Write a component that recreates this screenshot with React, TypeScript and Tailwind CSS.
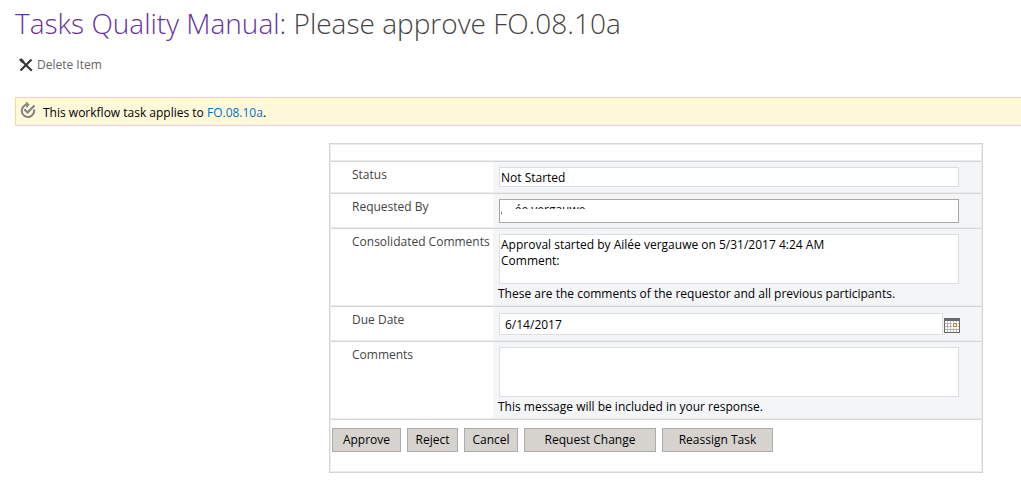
import type { ReactNode } from "react";

const fieldBox = "block w-full border border-[#dcdee1] bg-white text-black outline-none";
const divider = "mt-px border-t border-[#d6d6d6] shadow-[0_-1px_0_#ebebeb]";

function DeleteIcon() {
  return (
    <svg width="14" height="14" viewBox="0 0 14 14" aria-hidden="true">
      <path d="M1.5 1.5 12.8 12.8M12.5 1.5 1.5 12.5" stroke="#35383b" strokeWidth="2.2" fill="none" />
      <path d="M0 1.5 2.5.2 5.5 3.5 3 5z" fill="#35383b" />
    </svg>
  );
}

function WorkflowIcon() {
  return (
    <svg width="16" height="16" viewBox="0 0 16 16" fill="none" stroke="#808080" aria-hidden="true">
      <path d="M14 7.5A6.2 6.2 0 1 1 7.5 2.6" strokeWidth="2" />
      <path d="M5.8.3 8.6 2.6 6.4 5.4" strokeWidth="1.5" />
      <path d="M4.3 7.3 7.5 10.5 14.5 3.5" strokeWidth="2" />
    </svg>
  );
}

function CalendarIcon() {
  return (
    <svg width="16" height="15" viewBox="0 0 16 15" shapeRendering="crispEdges" aria-hidden="true">
      <path fill="#6b6b6b" d="M0 0h16v15H0z" />
      <path fill="#fff" d="M1 3h14v11H1z" />
      <path fill="#b5b5b5" d="M3 3h1v11H3zM6 3h1v11H6zM9 3h1v11H9zM12 3h1v11h-1zM1 5h14v1H1zM1 8h14v1H1zM1 11h14v1H1z" />
      <path fill="#fff" d="M8 4h6v6H8z" />
      <path fill="#e07b1a" d="M9 5h4v4H9z" />
      <path fill="#fff" d="M10 6h2v2h-2z" />
    </svg>
  );
}

interface RowProps {
  label: string;
  id: string;
  children: ReactNode;
}

function FormRow({ label, id, children }: RowProps) {
  return (
    <div className={`flex ${divider}`}>
      <label htmlFor={id} className="w-[162px] shrink-0 pt-[5px] pl-[21px] text-[#444]">
        {label}
      </label>
      <div className="min-w-0 flex-1 bg-[#f4f5f7] pt-[5px] pr-[22px] pl-[5px]">{children}</div>
    </div>
  );
}

const actions = [
  { name: "Approve", width: "w-[69px]" },
  { name: "Reject", width: "w-[51px]" },
  { name: "Cancel", width: "w-[54px]" },
  { name: "Request Change", width: "w-[132px]" },
  { name: "Reassign Task", width: "w-[111px]" },
];

export default function App() {
  return (
    <main className="pt-[3px] pb-5 pl-[15px] font-['Open_Sans','Noto_Sans',sans-serif] text-[12px] leading-4 text-black">
      <h1 className="text-[28px] leading-10 font-light whitespace-nowrap text-[#444]">
        <a href="#tasks" className="text-[#663399]">
          Tasks Quality Manual
        </a>
        : Please approve FO.08.10a
      </h1>

      <button type="button" className="mt-[13px] ml-1 flex h-[18px] items-center gap-1 text-[#666]">
        <DeleteIcon />
        Delete Item
      </button>

      <div className="mt-[23px] flex h-[29px] border border-r-0 border-[#f9dc87] bg-[#fff8db] pt-1 pl-1">
        <WorkflowIcon />
        <p className="pt-[3px] pl-[7px]">
          This workflow task applies to{" "}
          <a href="#document" className="text-[#0072c6]">
            FO.08.10a
          </a>
          .
        </p>
      </div>

      <form
        className="mt-[17px] mr-[38px] ml-[314px] border border-[#d6d6d6] px-px pt-4 pb-px shadow-[inset_0_0_0_1px_#ebebeb]"
        onSubmit={(e) => e.preventDefault()}
      >
        <FormRow label="Status" id="status">
          <div className="pb-[5px] pl-px">
            <input id="status" readOnly defaultValue="Not Started" className={`${fieldBox} h-5 px-px`} />
          </div>
        </FormRow>

        <FormRow label="Requested By" id="requested-by">
          <div className="relative pb-1 pl-px">
            <input
              id="requested-by"
              readOnly
              defaultValue="Ailée vergauwe"
              className="block h-6 w-full border border-[#a6a6a6] bg-white px-px pb-1 outline-none"
            />
            {/* requester's name is masked */}
            <span className="absolute top-[10px] left-1 h-3 w-24 bg-white" />
            <span className="absolute top-1 left-1 h-4 w-3 bg-white" />
          </div>
        </FormRow>

        <FormRow label="Consolidated Comments" id="consolidated">
          <div className="pl-px">
            <textarea
              id="consolidated"
              readOnly
              defaultValue={"Approval started by Ailée vergauwe on 5/31/2017 4:24 AM\nComment:"}
              className={`${fieldBox} h-[50px] resize-none px-px pt-[2px]`}
            />
          </div>
          <p className="pt-[2px] pb-[3px]">These are the comments of the requestor and all previous participants.</p>
        </FormRow>

        <FormRow label="Due Date" id="due-date">
          <div className="flex items-center gap-px pt-px pb-[5px] pl-px">
            <input id="due-date" defaultValue="6/14/2017" className={`${fieldBox} h-[22px] px-[5px]`} />
            <button type="button" aria-label="Pick a date" className="-mr-px shrink-0 pt-[3px]">
              <CalendarIcon />
            </button>
          </div>
        </FormRow>

        <FormRow label="Comments" id="comments">
          <div className="pl-px">
            <textarea id="comments" className={`${fieldBox} h-[50px] resize-none`} />
          </div>
          <p className="pt-[2px] pb-[3px]">This message will be included in your response.</p>
        </FormRow>

        <div className={`flex gap-[6px] pt-2 pb-[19px] pl-px ${divider}`}>
          {actions.map(({ name, width }) => (
            <button
              key={name}
              type="button"
              className={`${width} h-6 border border-[#ababab] bg-[#d6d3ce] whitespace-nowrap`}
            >
              {name}
            </button>
          ))}
        </div>
      </form>
    </main>
  );
}
